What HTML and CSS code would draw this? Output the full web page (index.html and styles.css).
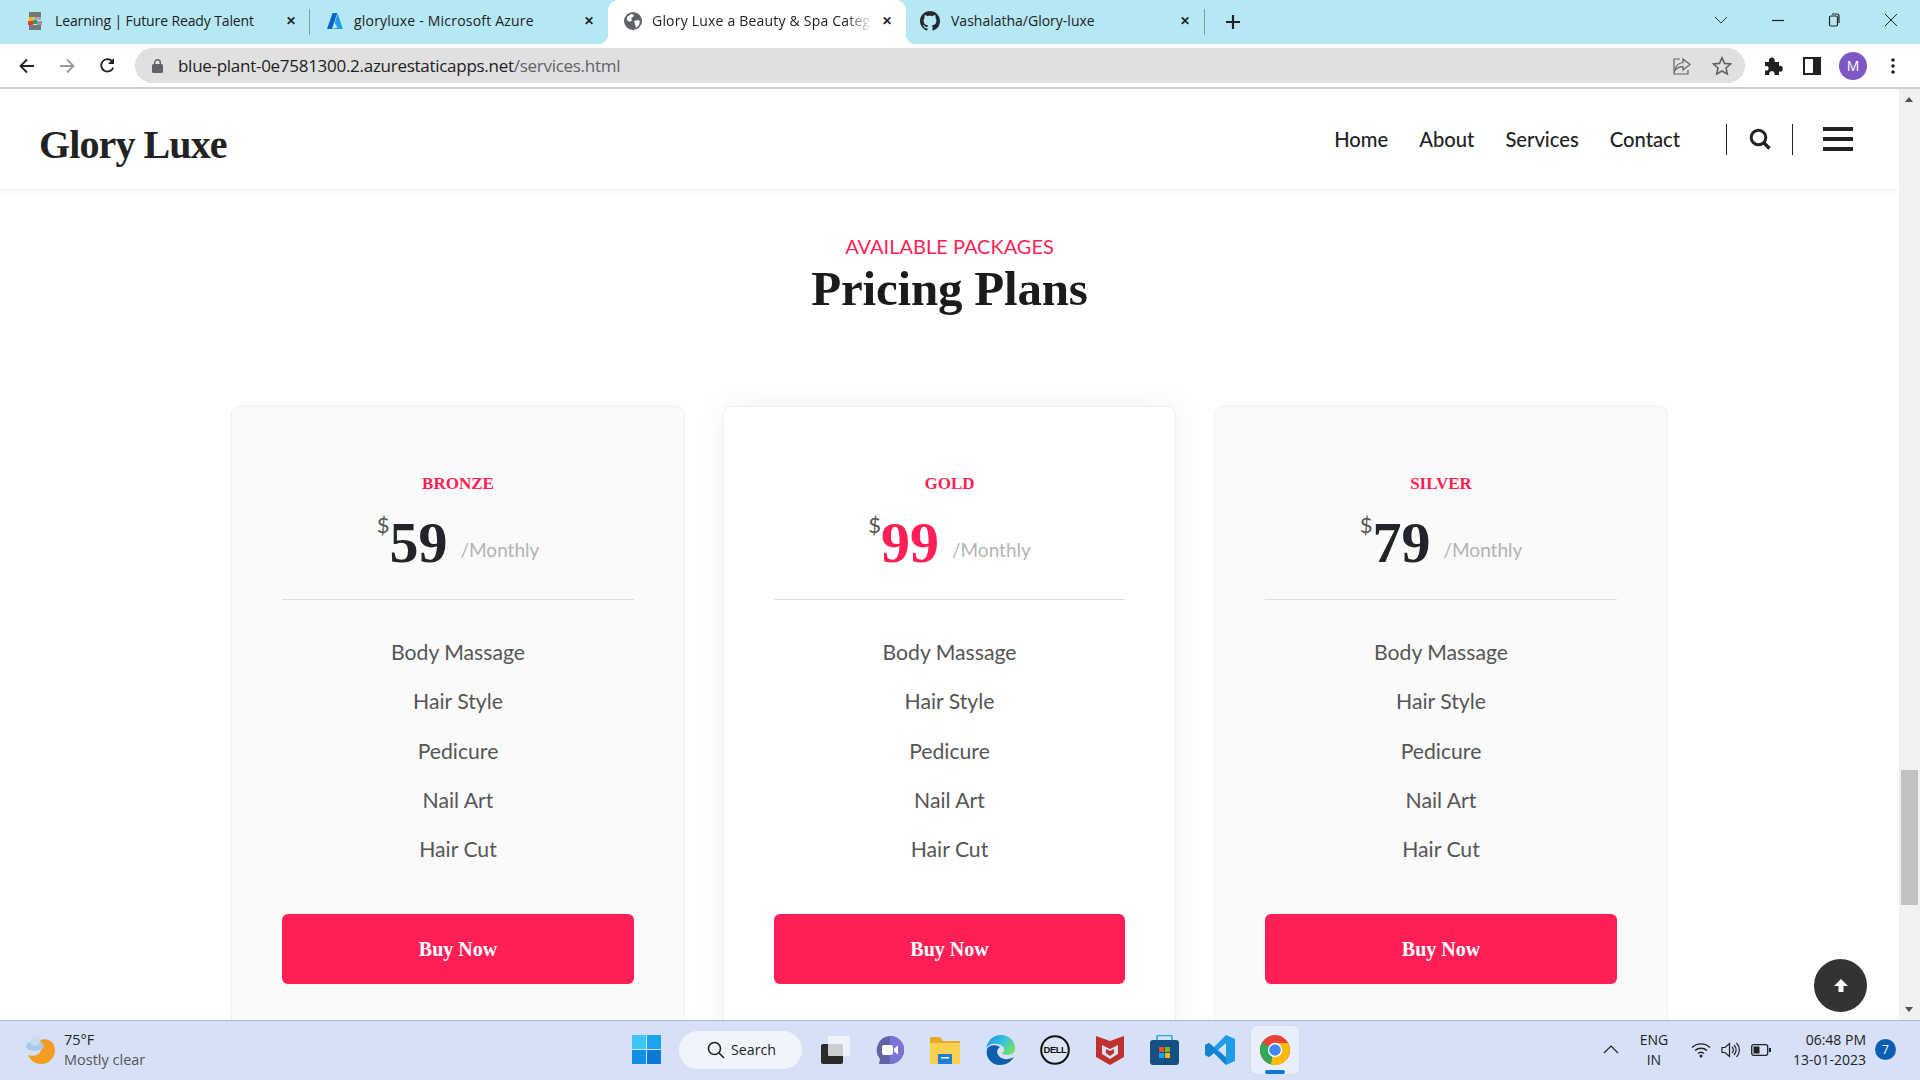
FILE: index.html
```html
<!DOCTYPE html>
<html lang="en">
<head>
<meta charset="utf-8">
<title>Glory Luxe</title>
<link rel="stylesheet" href="styles.css">
</head>
<body>
<div class="tabstrip">
  <div class="tab">
    <svg class="fav" width="18" height="18" viewBox="0 0 18 18"><rect x="3" y="0" width="12" height="5" fill="#777"/><rect x="3" y="5" width="4" height="4" fill="#f4b400"/><rect x="8" y="5" width="7" height="3" fill="#aaa"/><rect x="2" y="9" width="5" height="4" fill="#e53935"/><rect x="7" y="8" width="4" height="4" fill="#2e9e5b"/><rect x="11" y="9" width="5" height="4" fill="#999"/><rect x="3" y="13" width="12" height="5" fill="#777"/></svg>
    <span class="tab-title tight">Learning | Future Ready Talent</span>
    <span class="tab-x">✕</span>
  </div>
  <div class="tab sep">
    <svg class="fav" width="18" height="18" viewBox="0 0 18 18"><path d="M6.600 1h4.600L6 17H1z" fill="#0a64c8"/><path d="M11.600 1.600 17 17H5.600l6-1.600-3-4.400z" fill="#2a9be8"/></svg>
    <span class="tab-title wide">gloryluxe - Microsoft Azure</span>
    <span class="tab-x">✕</span>
  </div>
  <div class="tab active">
    <svg class="fav" width="18" height="18" viewBox="0 0 18 18"><circle cx="9" cy="9" r="9" fill="#5f6368"/><path d="M3 5c2-1 3-3 5-3l2 1-1 2-2 1 1 2-2 2-3-2zM10 9l4-1 2 1-1 4-3 3-1-4z" fill="#fff"/></svg>
    <span class="tab-title wide fade">Glory Luxe a Beauty &amp; Spa Categ</span>
    <span class="tab-x">✕</span>
  </div>
  <div class="tab">
    <svg class="fav" width="20" height="20" viewBox="0 0 16 16"><path fill="#24292f" d="M8 0C3.580 0 0 3.580 0 8c0 3.540 2.290 6.530 5.470 7.590.4.070.55-.17.55-.38 0-.19-.01-.82-.01-1.490-2.010.37-2.530-.49-2.690-.94-.09-.23-.48-.94-.82-1.130-.28-.15-.68-.52-.01-.53.63-.01 1.080.58 1.230.82.72 1.210 1.870.87 2.330.66.07-.52.28-.87.51-1.070-1.780-.2-3.640-.89-3.640-3.950 0-.87.31-1.590.82-2.150-.08-.2-.36-1.020.08-2.120 0 0 .67-.21 2.200.82.64-.18 1.320-.27 2-.27.68 0 1.360.09 2 .27 1.530-1.040 2.200-.82 2.200-.82.44 1.100.16 1.920.08 2.120.51.56.82 1.270.82 2.150 0 3.070-1.870 3.750-3.650 3.950.29.25.54.73.54 1.480 0 1.070-.01 1.930-.01 2.200 0 .21.15.46.55.38A8.013 8.013 0 0016 8c0-4.420-3.580-8-8-8z"/></svg>
    <span class="tab-title">Vashalatha/Glory-luxe</span>
    <span class="tab-x">✕</span>
  </div>
  <div class="newtab-sep"></div>
  <svg class="newtab" width="16" height="16" viewBox="0 0 16 16"><path d="M8 1v14M1 8h14" stroke="#202124" stroke-width="2.200"/></svg>
  <div class="win-controls">
    <svg width="14" height="8" viewBox="0 0 14 8"><path d="M1 1l6 6 6-6" fill="none" stroke="#333" stroke-width="1"/></svg>
    <svg width="12" height="12" viewBox="0 0 12 12"><path d="M0 6.500h12" stroke="#222" stroke-width="1.200"/></svg>
    <svg width="12" height="14" viewBox="0 0 12 14"><rect x="1.500" y="3" width="8" height="10" rx="1.500" fill="none" stroke="#222" stroke-width="1.200"/><path d="M4 1h5a2 2 0 0 1 2 2v7" fill="none" stroke="#222" stroke-width="1.200"/></svg>
    <svg width="14" height="14" viewBox="0 0 14 14"><path d="M1 1l12 12M13 1L1 13" stroke="#222" stroke-width="1"/></svg>
  </div>
</div>

<div class="toolbar">
  <div class="nav-btns">
    <svg width="16" height="16" viewBox="0 0 16 16"><path d="M15 8H2M8 1.500 1.500 8 8 14.500" fill="none" stroke="#202124" stroke-width="1.800"/></svg>
    <svg width="16" height="16" viewBox="0 0 16 16"><path d="M1 8h13M8 1.500 14.500 8 8 14.500" fill="none" stroke="#9a9a9a" stroke-width="1.800"/></svg>
    <svg width="17" height="17" viewBox="0 0 17 17"><path d="M14.200 10.600A6.200 6.200 0 1 1 13 4.200" fill="none" stroke="#202124" stroke-width="1.800"/><path d="M15 1v6H9z" fill="#202124"/></svg>
  </div>
  <div class="omnibox">
    <svg class="lock" width="11" height="14" viewBox="0 0 11 14"><rect x="0" y="5" width="11" height="9" rx="1.500" fill="#5f6368"/><path d="M2.700 5.500V3.600a2.800 2.800 0 0 1 5.600 0v1.900" fill="none" stroke="#5f6368" stroke-width="1.400"/></svg>
    <span class="url">blue-plant-0e7581300.2.azurestaticapps.net<span class="url-path">/services.html</span></span>
    <svg class="omni-share" width="20" height="20" viewBox="0 0 20 20"><path d="M11 3l7 5.500-7 5.500v-3.400c-3.600 0-6 1.200-8 4 .5-4.400 3-7.400 8-8.100z" fill="none" stroke="#5f6368" stroke-width="1.200"/><path d="M8 3H2v15h14v-4" fill="none" stroke="#5f6368" stroke-width="1.200"/></svg>
    <svg class="omni-star" width="20" height="20" viewBox="0 0 20 20"><path d="M10 1.800l2.500 5.600 6 .6-4.500 4 1.300 6L10 15l-5.300 3 1.300-6-4.500-4 6-.6z" fill="none" stroke="#5f6368" stroke-width="1.600"/></svg>
  </div>
  <div class="tool-icons">
    <svg width="20" height="20" viewBox="0 0 20 20"><path d="M2 6h4c-.6-3 1-4.500 2.800-4.500S12.200 3 11.600 6h4.400v4c3-.6 3.800 1 3.800 2.800s-.8 3.400-3.800 2.800V19h-4.600c.6-3-1-3.800-2.600-3.800S5.800 16 6.400 19H2v-4.500c2.600.5 3.600-.8 3.600-2.300S4.600 9.600 2 10.200z" fill="#202124"/></svg>
    <svg width="18" height="18" viewBox="0 0 18 18"><path d="M1 1h16v16H1z" fill="none" stroke="#202124" stroke-width="2"/><rect x="10" y="1" width="7" height="16" fill="#202124"/></svg>
    <div class="avatar">M</div>
    <svg class="dots" width="4" height="18" viewBox="0 0 4 18"><circle cx="2" cy="3" r="1.800" fill="#202124"/><circle cx="2" cy="9" r="1.800" fill="#202124"/><circle cx="2" cy="15" r="1.800" fill="#202124"/></svg>
  </div>
</div>

<div class="browser-body">
  <div class="viewport">
    <header class="site-header">
      <div class="logo">Glory Luxe</div>
      <nav class="site-nav">
        <a>Home</a><a>About</a><a>Services</a><a>Contact</a>
      </nav>
      <div class="header-tools">
        <svg width="22" height="22" viewBox="0 0 22 22"><circle cx="9.500" cy="9.500" r="7.300" fill="none" stroke="#222" stroke-width="3"/><path d="M14.800 14.800 20.500 20.500" stroke="#222" stroke-width="3.400"/></svg>
      </div>
      <div class="burger"><i></i><i></i><i></i></div>
    </header>

    <section class="pricing">
      <p class="eyebrow">AVAILABLE PACKAGES</p>
      <h2 class="section-title">Pricing Plans</h2>
      <div class="plans">
        <article class="plan">
          <h3 class="plan-name">BRONZE</h3>
          <div class="price"><sup class="cur">$</sup><span class="amount">59</span><span class="per">/Monthly</span></div>
          <ul class="features"><li>Body Massage</li><li>Hair Style</li><li>Pedicure</li><li>Nail Art</li><li>Hair Cut</li></ul>
          <a class="buy">Buy Now</a>
        </article>
        <article class="plan featured">
          <h3 class="plan-name">GOLD</h3>
          <div class="price"><sup class="cur">$</sup><span class="amount">99</span><span class="per">/Monthly</span></div>
          <ul class="features"><li>Body Massage</li><li>Hair Style</li><li>Pedicure</li><li>Nail Art</li><li>Hair Cut</li></ul>
          <a class="buy">Buy Now</a>
        </article>
        <article class="plan">
          <h3 class="plan-name">SILVER</h3>
          <div class="price"><sup class="cur">$</sup><span class="amount">79</span><span class="per">/Monthly</span></div>
          <ul class="features"><li>Body Massage</li><li>Hair Style</li><li>Pedicure</li><li>Nail Art</li><li>Hair Cut</li></ul>
          <a class="buy">Buy Now</a>
        </article>
      </div>
    </section>

    <a class="to-top"><svg width="14" height="13" viewBox="0 0 14 13"><path d="M7 0l7 7H9.500v6h-5V7H0z" fill="#fff"/></svg></a>
  </div>
  <div class="scrollbar">
    <span class="arrow-up"></span>
    <div class="thumb"></div>
    <span class="arrow-down"></span>
  </div>
</div>

<footer class="taskbar">
  <div class="weather">
    <svg width="30" height="29" viewBox="0 0 30 29"><path d="M15 5c10-3 15 4 15 10 0 8-6 14-14 14-6 0-11-4-13-9 8 3 18-3 12-15z" fill="#f39c1f"/><ellipse cx="10" cy="11" rx="9" ry="5" fill="#a9c8ea"/><ellipse cx="10" cy="6" rx="5" ry="5" fill="#c7dcf2"/></svg>
    <div class="weather-text"><span class="temp">75°F</span><span class="cond">Mostly clear</span></div>
  </div>
  <div class="tb-center">
    <svg class="win-logo" width="29" height="29" viewBox="0 0 29 29"><rect width="14" height="14" fill="#3cc5f5"/><rect x="15" width="14" height="14" fill="#1aa5ee"/><rect y="15" width="14" height="14" fill="#0f8fe2"/><rect x="15" y="15" width="14" height="14" fill="#0a78d4"/></svg>
    <div class="tb-search">
      <svg width="18" height="18" viewBox="0 0 18 18"><circle cx="7.500" cy="7.500" r="6" fill="none" stroke="#1f1f1f" stroke-width="1.600"/><path d="M12 12l5 5" stroke="#1f1f1f" stroke-width="1.600"/></svg>
      <span>Search</span>
    </div>
    <div class="tb-icon">
      <svg width="30" height="30" viewBox="0 0 30 30"><rect x="1" y="9" width="22" height="20" rx="2" fill="#2b2b2b"/><rect x="8" y="1" width="22" height="20" rx="1" fill="#f4f6fb" opacity=".8"/></svg>
    </div>
    <div class="tb-icon">
      <svg width="30" height="30" viewBox="0 0 30 30"><path d="M15 1a14 14 0 0 1 0 28H4l1-5A14 14 0 0 1 15 1z" fill="#6264a7"/><path d="M15 1a14 14 0 0 1 0 28z" fill="#7b73d6"/><rect x="7" y="10" width="11" height="10" rx="2" fill="#fff"/><path d="M19 13.500l4-3v9l-4-3z" fill="#fff"/></svg>
    </div>
    <div class="tb-icon">
      <svg width="30" height="28" viewBox="0 0 30 28"><path d="M0 2a1 1 0 0 1 1-1h9l3 4h17v22H0z" fill="#e6a92a"/><rect y="7" width="30" height="21" fill="#fcd04f"/><rect x="8" y="18" width="14" height="10" fill="#1f7fd6"/><rect x="11" y="21" width="8" height="1.500" fill="#fff"/></svg>
    </div>
    <div class="tb-icon">
      <svg width="30" height="30" viewBox="0 0 30 30"><defs><linearGradient id="edgeB" x1="0" y1="0" x2="1" y2=".6"><stop offset="0" stop-color="#1b8fd8"/><stop offset=".55" stop-color="#35c1e1"/><stop offset="1" stop-color="#6ee06a"/></linearGradient></defs><path d="M2 14C0 22 6 30 15 30c6 0 11-3 14-8-5 3-12 3-15-1-3-3-2-7 1-9C10 9 4 10 2 14z" fill="#0f5fae"/><path d="M1 14C2 6 8 0 16 0c8 0 14 6 14 13 0 5-4 7-8 7-3 0-5-1-5-2 3-1 3-5 0-7C11 7 3 9 1 14z" fill="url(#edgeB)"/></svg>
    </div>
    <div class="tb-icon">
      <svg width="30" height="30" viewBox="0 0 30 30"><circle cx="15" cy="15" r="13.800" fill="#fff" fill-opacity=".15" stroke="#111" stroke-width="2"/><text x="15" y="18" text-anchor="middle" class="dell">DELL</text></svg>
    </div>
    <div class="tb-icon">
      <svg width="28" height="30" viewBox="0 0 28 30"><path d="M0 1l14 5 14-5v21l-14 8-14-8z" fill="#c0302c"/><path d="M6 10l8 4 8-4v9l-8 5-8-5z" fill="#d6e1f7"/><path d="M10 14l4 2 4-2v4l-4 3-4-3z" fill="#c0302c"/></svg>
    </div>
    <div class="tb-icon">
      <svg width="29" height="30" viewBox="0 0 29 30"><path d="M7 6V2a1.500 1.500 0 0 1 1.500-1.500h12A1.500 1.500 0 0 1 22 2v4" fill="none" stroke="#2aa5e8" stroke-width="1.600"/><rect y="5" width="29" height="25" rx="3" fill="#164f86"/><rect x="9" y="12" width="5" height="5" fill="#f25022"/><rect x="15" y="12" width="5" height="5" fill="#7fba00"/><rect x="9" y="18" width="5" height="5" fill="#00a4ef"/><rect x="15" y="18" width="5" height="5" fill="#ffb900"/></svg>
    </div>
    <div class="tb-icon">
      <svg width="30" height="30" viewBox="0 0 30 30"><path d="M21 0l9 4v22l-9 4-12-12-5 4-4-2v-10l4-2 5 4z" fill="#1e9ce8"/><path d="M21 8v14l-8-7z" fill="#d6e1f7"/><path d="M0 10l4-2 17 15v7L9 18l-5 4-4-2z" fill="#0f7cc4" opacity=".75"/></svg>
    </div>
    <div class="tb-icon current">
      <svg width="30" height="30" viewBox="0 0 30 30"><circle cx="15" cy="15" r="15" fill="#ea4335"/><path d="M15 15 2 7.500A15 15 0 0 0 11 29.500z" fill="#34a853"/><path d="M15 8h13a15 15 0 0 1-17 21.500z" fill="#fbbc05"/><circle cx="15" cy="15" r="7.200" fill="#fff"/><circle cx="15" cy="15" r="5.800" fill="#4285f4"/></svg>
    </div>
  </div>
  <div class="tray">
    <svg width="16" height="9" viewBox="0 0 16 9"><path d="M1 8l7-7 7 7" fill="none" stroke="#222" stroke-width="1.200"/></svg>
    <div class="lang"><span>ENG</span><span>IN</span></div>
    <div class="tray-icons">
      <svg width="20" height="16" viewBox="0 0 20 16"><path d="M1 5.500a13 13 0 0 1 18 0M4 8.500a9 9 0 0 1 12 0M7 11.500a4.500 4.500 0 0 1 6 0" fill="none" stroke="#222" stroke-width="1.400"/><circle cx="10" cy="14" r="1.500" fill="#222"/></svg>
      <svg width="20" height="16" viewBox="0 0 20 16"><path d="M1 5.500h3l4.500-4v13L4 10.500H1z" fill="none" stroke="#222" stroke-width="1.200"/><path d="M11 5a4 4 0 0 1 0 6M13 3a7 7 0 0 1 0 10M15.500 1a10 10 0 0 1 0 14" fill="none" stroke="#222" stroke-width="1.200"/></svg>
      <svg width="20" height="12" viewBox="0 0 20 12"><rect x=".7" y=".7" width="16" height="10.600" rx="2" fill="none" stroke="#222" stroke-width="1.300"/><rect x="2.500" y="2.500" width="6" height="7" fill="#222"/><rect x="18" y="4" width="2" height="4" fill="#222"/></svg>
    </div>
    <div class="clock"><span>06:48 PM</span><span>13-01-2023</span></div>
    <div class="badge">7</div>
  </div>
</footer>
</body>
</html>
```
FILE: styles.css
```css
* { box-sizing: border-box; }
html, body { margin: 0; height: 100%; overflow: hidden; }
body {
  display: flex;
  flex-direction: column;
  width: 1920px;
  height: 1080px;
  font-family: "Lato", sans-serif;
  background: #fff;
  color: #222;
}

/* tab strip */
.tabstrip {
  flex: 0 0 44px;
  display: flex;
  align-items: stretch;
  padding-left: 12px;
  background: #b6e8f4;
}
.tab {
  position: relative;
  flex: 0 0 298px;
  min-width: 0;
  display: flex;
  align-items: center;
  padding: 0 10px 3px 14px;
  font-family: "Open Sans", sans-serif;
  font-size: 14px;
  color: #202124;
}
.tab.sep::before,
.newtab-sep {
  content: "";
  width: 1px;
  height: 26px;
  background: #7f9aa3;
}
.tab.sep::before { position: absolute; left: -1px; top: 9px; }
.newtab-sep { align-self: center; }
.tab.active {
  background: #fff;
  border-radius: 11px 11px 0 0;
}
.tab.active::before,
.tab.active::after {
  content: "";
  position: absolute;
  bottom: 0;
  width: 10px;
  height: 10px;
}
.tab.active::before { left: -10px; background: radial-gradient(circle at 0 0, transparent 10px, #fff 10.500px); }
.tab.active::after { right: -10px; background: radial-gradient(circle at 100% 0, transparent 10px, #fff 10.500px); }
.fav { flex: none; margin-right: 11px; }
.tab.sep .fav, .tab.active .fav { margin-left: 2px; margin-right: 10px; }
.tab-title {
  flex: 1;
  min-width: 0;
  white-space: nowrap;
  overflow: hidden;
}
.tab-title.tight { letter-spacing: -.12px; }
.tab-title.wide { letter-spacing: .2px; }
.tab-title.fade {
  -webkit-mask-image: linear-gradient(90deg, #000 88%, transparent 100%);
  mask-image: linear-gradient(90deg, #000 88%, transparent 100%);
}
.tab-x {
  flex: none;
  width: 18px;
  margin-left: 6px;
  font-size: 12px;
  font-weight: 700;
  text-align: center;
  color: #202124;
}
.newtab { align-self: center; margin-left: 20px; }
.win-controls {
  margin-left: auto;
  align-self: center;
  display: flex;
  align-items: center;
  gap: 44px;
  padding: 0 22px 5px 0;
}

/* toolbar */
.toolbar {
  flex: 0 0 45px;
  display: flex;
  align-items: center;
  border-bottom: 2px solid #cfcfcf;
  background: #fff;
}
.nav-btns {
  flex: 0 0 135px;
  display: flex;
  align-items: center;
  gap: 24px;
  padding-left: 19px;
}
.omnibox {
  flex: 0 0 1610px;
  height: 35px;
  display: flex;
  align-items: center;
  padding: 0 13px 0 17px;
  border-radius: 18px;
  background: #e0e0e0;
}
.url {
  margin-left: 15px;
  font-family: "Open Sans", sans-serif;
  font-size: 17px;
  letter-spacing: -.28px;
  color: #202124;
  white-space: nowrap;
}
.url-path { color: #5f6368; }
.omni-share { margin-left: auto; }
.omni-star { margin-left: 20px; }
.tool-icons {
  flex: 1;
  display: flex;
  align-items: center;
  gap: 20px;
  padding-left: 18px;
}
.avatar {
  width: 28px;
  height: 28px;
  margin-left: -2px;
  border-radius: 50%;
  background: #7e57c2;
  color: #fff;
  font-family: "Open Sans", sans-serif;
  font-size: 14px;
  line-height: 28px;
  text-align: center;
}
.dots { margin-left: 4px; }

/* page */
.browser-body {
  flex: 1;
  min-height: 0;
  display: flex;
}
.viewport {
  position: relative;
  flex: 1;
  min-width: 0;
  overflow: hidden;
}
.scrollbar {
  position: relative;
  flex: 0 0 21px;
  background: #f1f1f1;
}
.thumb {
  position: absolute;
  top: 681px;
  left: 2px;
  width: 17px;
  height: 135px;
  background: #c1c1c1;
}
.arrow-up, .arrow-down {
  position: absolute;
  left: 6px;
  border-left: 4.500px solid transparent;
  border-right: 4.500px solid transparent;
}
.arrow-up { top: 8px; border-bottom: 5px solid #505050; }
.arrow-down { bottom: 8px; border-top: 5px solid #505050; }

.site-header {
  position: relative;
  z-index: 2;
  display: flex;
  align-items: center;
  height: 100px;
  padding-left: 39px;
  background: #fff;
  box-shadow: 0 1px 6px rgba(0, 0, 0, .08);
}
.logo {
  margin-top: 11px;
  font-family: "Liberation Serif", serif;
  font-weight: 700;
  font-size: 40px;
  letter-spacing: -.9px;
  color: #222;
}
.site-nav {
  display: flex;
  gap: 31px;
  margin-left: auto;
  font-family: "Lato", sans-serif;
  font-size: 20.200px;
  font-weight: 500;
  color: #222;
}
.header-tools {
  display: flex;
  align-items: center;
  justify-content: center;
  width: 67px;
  height: 31px;
  margin-left: 46px;
  border-left: 1px solid #222;
  border-right: 1px solid #222;
}
.burger {
  display: flex;
  flex-direction: column;
  gap: 6px;
  width: 30px;
  margin: 0 46px 0 30px;
}
.burger i { height: 4px; background: #222; }

.pricing { padding-top: 46px; text-align: center; }
.eyebrow {
  margin: 0;
  font-size: 20px;
  line-height: 23px;
  color: #ff1f56;
}
.section-title {
  margin: 1px 0 0;
  font-family: "Liberation Serif", serif;
  font-weight: 700;
  font-size: 49px;
  line-height: 60px;
  letter-spacing: -.2px;
  color: #1b1b1b;
}
.plans {
  display: grid;
  grid-template-columns: repeat(3, 453.500px);
  justify-content: center;
  column-gap: 38px;
  margin-top: 87px;
}
.plan {
  height: 760px;
  padding: 65px 50px 0;
  border: 1px solid #f0f0f0;
  border-radius: 8px;
  background: #fafafa;
}
.plan.featured {
  background: #fff;
  box-shadow: 0 0 30px rgba(0, 0, 0, .06);
}
.plan-name {
  margin: 0;
  font-family: "Liberation Serif", serif;
  font-weight: 700;
  font-size: 17px;
  line-height: 24px;
  color: #ff1f56;
}
.price {
  display: flex;
  align-items: flex-start;
  justify-content: center;
  height: 71px;
  margin-top: 14px;
  padding-top: 2px;
  padding-bottom: 16px;
  border-bottom: 1px solid #dedede;
  box-sizing: content-box;
}
.cur {
  margin-top: 0;
  font-size: 22px;
  font-weight: 400;
  line-height: 26px;
  color: #555;
}
.amount {
  font-family: "Liberation Serif", serif;
  font-weight: 700;
  font-size: 58px;
  line-height: 62px;
  color: #212529;
}
.featured .amount { color: #ff1f56; }
.per {
  margin: 23px 0 0 13px;
  font-size: 19px;
  line-height: 30px;
  color: #b3b3b3;
}
.features {
  margin: 28px 0 0;
  padding: 0;
  list-style: none;
  font-size: 21.200px;
  font-weight: 400;
  line-height: 49.300px;
  color: #555;
}
.buy {
  display: block;
  height: 70px;
  margin-top: 40px;
  border-radius: 6px;
  background: #ff1f56;
  color: #fff;
  font-family: "Liberation Serif", serif;
  font-weight: 700;
  font-size: 20px;
  line-height: 70px;
}
.to-top {
  position: absolute;
  right: 32px;
  bottom: 8px;
  display: flex;
  align-items: center;
  justify-content: center;
  width: 53px;
  height: 53px;
  border-radius: 50%;
  background: #333;
}

/* taskbar */
.taskbar {
  flex: 0 0 60px;
  display: flex;
  align-items: center;
  padding-bottom: 2px;
  border-top: 1px solid #aeb8cc;
  background: #d6e1f7;
}
.weather {
  flex: 0 0 632px;
  display: flex;
  align-items: center;
  gap: 9px;
  padding-left: 25px;
}
.weather-text {
  display: flex;
  flex-direction: column;
  font-family: "Open Sans", sans-serif;
  font-size: 14.500px;
  line-height: 20px;
}
.temp { color: #222; }
.cond { color: #555; }
.tb-center { display: flex; align-items: center; }
.win-logo { margin-right: 18px; }
.tb-search {
  display: flex;
  align-items: center;
  gap: 6px;
  width: 123px;
  height: 38px;
  padding-left: 28px;
  border-radius: 19px;
  background: #f0f4fd;
  font-family: "Open Sans", sans-serif;
  font-size: 14.200px;
  color: #222;
}
.tb-icon {
  position: relative;
  display: flex;
  align-items: center;
  justify-content: center;
  width: 55px;
  height: 48px;
}
.tb-search + .tb-icon { margin-left: 5px; }
.tb-icon.current {
  width: 48px;
  margin-left: 4px;
  border-radius: 5px;
  background: #e9eefb;
  box-shadow: 0 0 1px rgba(0, 0, 0, .2);
}
.tb-icon.current::after {
  content: "";
  position: absolute;
  left: 14px;
  bottom: 0;
  width: 20px;
  height: 4px;
  border-radius: 2px;
  background: #0a78d4;
}
.dell {
  font-family: "Liberation Sans", sans-serif;
  font-size: 9.500px;
  font-weight: 700;
  letter-spacing: -.5px;
  fill: #111;
}
.tray {
  display: flex;
  align-items: center;
  margin-left: auto;
}
.lang {
  display: flex;
  flex-direction: column;
  align-items: center;
  width: 36px;
  margin-left: 17px;
  font-family: "Open Sans", sans-serif;
  font-size: 14px;
  line-height: 20px;
  color: #222;
}
.tray-icons {
  display: flex;
  align-items: center;
  gap: 10px;
  margin-left: 19px;
}
.clock {
  display: flex;
  flex-direction: column;
  align-items: flex-end;
  margin-left: 22px;
  font-family: "Open Sans", sans-serif;
  font-size: 14px;
  line-height: 20px;
  color: #222;
}
.badge {
  width: 21px;
  height: 21px;
  margin: 0 24px 0 9px;
  border-radius: 50%;
  background: #0a5fb4;
  color: #fff;
  font-family: "Open Sans", sans-serif;
  font-size: 12px;
  line-height: 21px;
  text-align: center;
}
```
